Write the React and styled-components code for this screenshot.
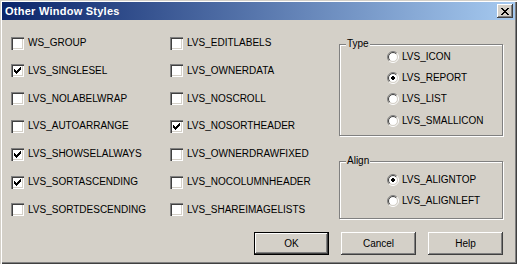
import React from "react";
import styled, { createGlobalStyle } from "styled-components";

const Global = createGlobalStyle`
  html, body { margin: 0; padding: 0; background: #d4d0c8; }
  body { font-family: "Liberation Sans", Arial, sans-serif; }
`;

const Window = styled.div`
  width: 517px;
  height: 264px;
  box-sizing: border-box;
  background: #d4d0c8;
  padding: 2px;
  display: flex;
  flex-direction: column;
  box-shadow: inset 1px 1px 0 #d4d0c8, inset 2px 2px 0 #ffffff,
    inset -1px -1px 0 #404040, inset -2px -2px 0 #808080;
`;

const TitleBar = styled.div`
  height: 18px;
  flex: none;
  display: flex;
  align-items: center;
  justify-content: space-between;
  padding: 0 2px 0 3px;
  background: linear-gradient(to right, #0a246a, #a6caf0);
`;

const TitleText = styled.span`
  color: #fff;
  font-weight: bold;
  font-size: 11px;
  letter-spacing: 0.25px;
  line-height: 18px;
`;

const CloseButton = styled.div`
  width: 16px;
  height: 14px;
  box-sizing: border-box;
  background: #d4d0c8;
  display: flex;
  align-items: center;
  justify-content: center;
  box-shadow: inset -1px -1px 0 #404040, inset 1px 1px 0 #ffffff,
    inset -2px -2px 0 #808080;
`;

const Body = styled.div`
  flex: 1;
  display: flex;
  flex-direction: column;
  padding: 0 12px 0 9px;
  font-size: 10px;
  color: #000;
`;

const Main = styled.div`
  height: 212px;
  display: flex;
  align-items: flex-start;
`;

const CheckColumn = styled.div`
  width: ${(p) => p.$w}px;
  padding-top: 9.1px;
  display: grid;
  grid-auto-rows: 27.83px;
`;

const Row = styled.label`
  display: flex;
  align-items: center;
  gap: ${(p) => p.$gap || 4}px;
  white-space: nowrap;
  line-height: 12px;
`;

const BoxFrame = styled.span`
  width: 13px;
  height: 13px;
  flex: none;
  box-sizing: border-box;
  background: #fff;
  display: flex;
  align-items: center;
  justify-content: center;
  box-shadow: inset 1px 1px 0 #808080, inset 2px 2px 0 #404040,
    inset -1px -1px 0 #ffffff, inset -2px -2px 0 #d4d0c8;
`;

const RightColumn = styled.div`
  width: 165px;
  padding-top: 24px;
  display: flex;
  flex-direction: column;
`;

const Group = styled.div`
  position: relative;
  height: ${(p) => p.$h}px;
  margin-top: ${(p) => p.$mt || 0}px;
  box-sizing: border-box;
  border: 1px solid #808080;
  box-shadow: inset 1px 1px 0 #fff, 1px 1px 0 #fff;
  padding: ${(p) => p.$pt}px 0 0 47px;
  display: grid;
  grid-auto-rows: ${(p) => p.$rh}px;
`;

const Legend = styled.span`
  position: absolute;
  top: -8px;
  left: 6px;
  padding: 0 1px;
  background: #d4d0c8;
  line-height: 13px;
`;

const ButtonRow = styled.div`
  display: flex;
  justify-content: flex-end;
  gap: 12px;
`;

const Button = styled.div`
  width: 75px;
  height: 23px;
  box-sizing: border-box;
  display: flex;
  align-items: center;
  justify-content: center;
  background: #d4d0c8;
  border: ${(p) => (p.$default ? "1px solid #000" : "none")};
  box-shadow: inset -1px -1px 0 #404040, inset 1px 1px 0 #ffffff,
    inset -2px -2px 0 #808080;
`;

const CheckMark = () => (
  <svg width="7" height="7" viewBox="0 0 7 7" shapeRendering="crispEdges">
    <path
      fill="#000"
      d="M6 0h1v3h-1zM5 1h1v3h-1zM4 2h1v3h-1zM0 2h1v3h-1zM1 3h1v3h-1zM2 4h1v3h-1zM3 3h1v3h-1z"
    />
  </svg>
);

const Checkbox = ({ checked }) => (
  <BoxFrame>{checked && <CheckMark />}</BoxFrame>
);

const arc = (r, start) => {
  const c = 6;
  const d = r * Math.SQRT1_2;
  if (start === "tl")
    return `M${c - d} ${c + d} A${r} ${r} 0 0 1 ${c + d} ${c - d}`;
  return `M${c + d} ${c - d} A${r} ${r} 0 0 1 ${c - d} ${c + d}`;
};

const Radio = ({ checked }) => (
  <svg width="12" height="12" viewBox="0 0 12 12" style={{ flex: "none" }}>
    <circle cx="6" cy="6" r="4.5" fill="#fff" />
    <path d={arc(5.5, "tl")} stroke="#808080" fill="none" />
    <path d={arc(4.5, "tl")} stroke="#404040" fill="none" />
    <path d={arc(5.5, "br")} stroke="#ffffff" fill="none" />
    <path d={arc(4.5, "br")} stroke="#d4d0c8" fill="none" />
    {checked && (
      <path
        fill="#000"
        shapeRendering="crispEdges"
        d="M5 4h2v1h1v2h-1v1h-2v-1h-1v-2h1z"
      />
    )}
  </svg>
);

const CloseGlyph = () => (
  <svg width="8" height="7" viewBox="0 0 8 7" shapeRendering="crispEdges">
    <path
      fill="#000"
      d="M0 0h2v1h-2zM6 0h2v1h-2zM1 1h2v1h-2zM5 1h2v1h-2zM2 2h4v1h-4zM3 3h2v1h-2zM2 4h4v1h-4zM1 5h2v1h-2zM5 5h2v1h-2zM0 6h2v1h-2zM6 6h2v1h-2z"
    />
  </svg>
);

const col1 = [
  ["WS_GROUP", false],
  ["LVS_SINGLESEL", true],
  ["LVS_NOLABELWRAP", false],
  ["LVS_AUTOARRANGE", false],
  ["LVS_SHOWSELALWAYS", true],
  ["LVS_SORTASCENDING", true],
  ["LVS_SORTDESCENDING", false],
];

const col2 = [
  ["LVS_EDITLABELS", false],
  ["LVS_OWNERDATA", false],
  ["LVS_NOSCROLL", false],
  ["LVS_NOSORTHEADER", true],
  ["LVS_OWNERDRAWFIXED", false],
  ["LVS_NOCOLUMNHEADER", false],
  ["LVS_SHAREIMAGELISTS", false],
];

const types = [
  ["LVS_ICON", false],
  ["LVS_REPORT", true],
  ["LVS_LIST", false],
  ["LVS_SMALLICON", false],
];

const aligns = [
  ["LVS_ALIGNTOP", true],
  ["LVS_ALIGNLEFT", false],
];

export default function App() {
  return (
    <>
      <Global />
      <Window>
        <TitleBar>
          <TitleText>Other Window Styles</TitleText>
          <CloseButton>
            <CloseGlyph />
          </CloseButton>
        </TitleBar>
        <Body>
          <Main>
            <CheckColumn $w={160}>
              {col1.map(([t, c]) => (
                <Row key={t}>
                  <Checkbox checked={c} />
                  <span>{t}</span>
                </Row>
              ))}
            </CheckColumn>
            <CheckColumn $w={170}>
              {col2.map(([t, c]) => (
                <Row key={t}>
                  <Checkbox checked={c} />
                  <span>{t}</span>
                </Row>
              ))}
            </CheckColumn>
            <RightColumn>
              <Group $h={92} $pt={1} $rh={21.33}>
                <Legend>Type</Legend>
                {types.map(([t, c]) => (
                  <Row key={t} $gap={3}>
                    <Radio checked={c} />
                    <span>{t}</span>
                  </Row>
                ))}
              </Group>
              <Group $h={58} $mt={25} $pt={7.5} $rh={21}>
                <Legend>Align</Legend>
                {aligns.map(([t, c]) => (
                  <Row key={t} $gap={3}>
                    <Radio checked={c} />
                    <span>{t}</span>
                  </Row>
                ))}
              </Group>
            </RightColumn>
          </Main>
          <ButtonRow>
            <Button $default>OK</Button>
            <Button>Cancel</Button>
            <Button>Help</Button>
          </ButtonRow>
        </Body>
      </Window>
    </>
  );
}
